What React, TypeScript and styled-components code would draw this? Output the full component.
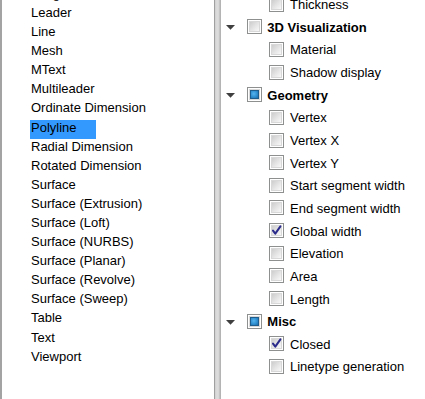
import React from "react";
import styled, { createGlobalStyle, css } from "styled-components";

const Global = createGlobalStyle`
  html, body { margin: 0; padding: 0; background: #ffffff; }
  body {
    font-family: "Liberation Sans", Arial, sans-serif;
    font-size: 13px;
    color: #000000;
  }
`;

const Frame = styled.div`
  display: flex;
  width: 425px;
  height: 399px;
  overflow: hidden;
  background: #ffffff;
`;

const LeftPanel = styled.div`
  width: 212px;
  height: 399px;
  border-left: 2px solid #a3a3a3;
  overflow: hidden;
  background: #ffffff;
  flex-shrink: 0;
`;

const ObjectList = styled.ul`
  list-style: none;
  margin: -16.2px 0 0 0;
  padding: 0 0 0 28px;
`;

const ObjectItem = styled.li`
  display: flex;
  align-items: flex-start;
  height: 19.1px;
  white-space: nowrap;
`;

const ItemLabel = styled.span<{ $selected?: boolean }>`
  display: block;
  padding: 0 1px;
  line-height: 19px;
  ${(p) =>
    p.$selected &&
    css`
      background: #3399ff;
      padding: 0 19px 0 1px;
      margin-top: 2.5px;
      height: 18.7px;
      line-height: 15px;
    `}
`;

const Splitter = styled.div`
  width: 7px;
  height: 399px;
  flex-shrink: 0;
  background: linear-gradient(
    to right,
    #a0a0a0 0px,
    #a0a0a0 1px,
    #cfcfcf 1px,
    #dedede 3px,
    #d6d6d6 5px,
    #b4b4b4 6px,
    #b4b4b4 7px
  );
`;

const RightPanel = styled.div`
  flex: 1;
  height: 399px;
  overflow: hidden;
  background: #ffffff;
`;

const Tree = styled.div`
  display: flex;
  flex-direction: column;
  margin-top: -7.15px;
`;

const TreeRow = styled.div<{ $child?: boolean }>`
  display: flex;
  align-items: center;
  height: 22.65px;
  flex-shrink: 0;
  white-space: nowrap;
  padding-left: ${(p) => (p.$child ? "48px" : "0px")};
`;

const Expander = styled.span`
  display: flex;
  align-items: center;
  justify-content: center;
  width: 18px;
  height: 100%;
  margin-right: 8px;
  padding-top: 2px;
  box-sizing: border-box;
`;

const Box = styled.span<{ $state: "off" | "on" | "mixed" }>`
  position: relative;
  display: inline-block;
  width: 15px;
  height: 15px;
  box-sizing: border-box;
  border: 1px solid #8e8f8f;
  background: #ffffff;
  flex-shrink: 0;
  &::before {
    content: "";
    position: absolute;
    left: 1px;
    top: 1px;
    right: 1px;
    bottom: 1px;
    background: linear-gradient(135deg, #cdcdcd 0%, #e6e6e6 55%, #f8f8f8 100%);
    border: 1px solid #d8d8d8;
    box-sizing: border-box;
  }
  ${(p) =>
    p.$state === "mixed" &&
    css`
      &::after {
        content: "";
        position: absolute;
        left: 2px;
        top: 2px;
        right: 2px;
        bottom: 2px;
        box-sizing: border-box;
        border: 1px solid #1f5d8c;
        background: radial-gradient(circle at 40% 40%, #56b4ee 0%, #2f8fd0 55%, #1f6aa6 100%);
      }
    `}
`;

const CheckMark = styled.svg`
  position: absolute;
  left: 1px;
  top: 1px;
  width: 11px;
  height: 11px;
  z-index: 1;
`;

const Label = styled.span<{ $bold?: boolean }>`
  margin-left: ${(p) => (p.$bold ? "5.3px" : "6px")};
  font-weight: ${(p) => (p.$bold ? 700 : 400)};
  padding-top: 1px;
`;

const Arrow = () => (
  <svg width="9" height="5" viewBox="0 0 9 5">
    <polygon points="0,0 9,0 4.5,4.8" fill="#3f3f3f" />
  </svg>
);

type State = "off" | "on" | "mixed";

const Check = ({ state }: { state: State }) => (
  <Box $state={state}>
    {state === "on" && (
      <CheckMark viewBox="0 0 11 11">
        <path
          d="M2 5.6 L4.3 8.6 L9.4 1.4"
          fill="none"
          stroke="#2b2b8c"
          strokeWidth="2"
          strokeLinecap="round"
          strokeLinejoin="round"
        />
      </CheckMark>
    )}
  </Box>
);

const objects = [
  "Image",
  "Leader",
  "Line",
  "Mesh",
  "MText",
  "Multileader",
  "Ordinate Dimension",
  "Polyline",
  "Radial Dimension",
  "Rotated Dimension",
  "Surface",
  "Surface (Extrusion)",
  "Surface (Loft)",
  "Surface (NURBS)",
  "Surface (Planar)",
  "Surface (Revolve)",
  "Surface (Sweep)",
  "Table",
  "Text",
  "Viewport",
];

type Node = { label: string; state: State; category?: boolean };

const nodes: Node[] = [
  { label: "Thickness", state: "off" },
  { label: "3D Visualization", state: "off", category: true },
  { label: "Material", state: "off" },
  { label: "Shadow display", state: "off" },
  { label: "Geometry", state: "mixed", category: true },
  { label: "Vertex", state: "off" },
  { label: "Vertex X", state: "off" },
  { label: "Vertex Y", state: "off" },
  { label: "Start segment width", state: "off" },
  { label: "End segment width", state: "off" },
  { label: "Global width", state: "on" },
  { label: "Elevation", state: "off" },
  { label: "Area", state: "off" },
  { label: "Length", state: "off" },
  { label: "Misc", state: "mixed", category: true },
  { label: "Closed", state: "on" },
  { label: "Linetype generation", state: "off" },
];

export default function App() {
  return (
    <>
      <Global />
      <Frame>
        <LeftPanel>
          <ObjectList>
            {objects.map((o) => (
              <ObjectItem key={o}>
                <ItemLabel $selected={o === "Polyline"}>{o}</ItemLabel>
              </ObjectItem>
            ))}
          </ObjectList>
        </LeftPanel>
        <Splitter />
        <RightPanel>
          <Tree>
            {nodes.map((n) =>
              n.category ? (
                <TreeRow key={n.label}>
                  <Expander>
                    <Arrow />
                  </Expander>
                  <Check state={n.state} />
                  <Label $bold>{n.label}</Label>
                </TreeRow>
              ) : (
                <TreeRow key={n.label} $child>
                  <Check state={n.state} />
                  <Label>{n.label}</Label>
                </TreeRow>
              )
            )}
          </Tree>
        </RightPanel>
      </Frame>
    </>
  );
}
